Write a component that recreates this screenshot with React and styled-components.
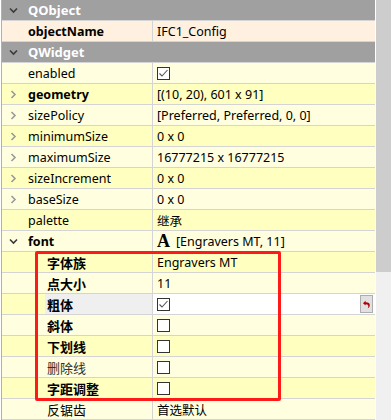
import React from 'react';
import styled, { createGlobalStyle } from 'styled-components';

const GlobalStyle = createGlobalStyle`
  html, body {
    margin: 0;
    padding: 0;
    background: #ffffff;
  }
  body {
    font-family: "Noto Sans", "Noto Sans CJK SC", sans-serif;
    font-size: 12.5px;
    color: #000;
  }
`;

const COLORS = {
  header: '#a0a0a0',
  grid: '#d4d4d4',
  peach: '#fff0df',
  light: '#ffffdf',
  yellow: '#ffffbf',
  selLabel: '#efefef',
  selValue: '#ffffff',
};

const Page = styled.div`
  display: flex;
  width: 391px;
  height: 420px;
  overflow: hidden;
`;

const Tree = styled.div`
  width: 373px;
  display: flex;
  flex-direction: column;
  border-left: 1px solid #b0b0b0;
  margin-left: 1px;
  border-right: 1px solid #ffffff;
`;

const ScrollBar = styled.div`
  width: 16px;
  background: #f0f0f0;
  display: flex;
  flex-direction: column;
`;

const Thumb = styled.div`
  height: 272px;
  background: #cdcdcd;
`;

const HeaderRow = styled.div`
  height: 20px;
  flex: none;
  display: flex;
  align-items: center;
  background: ${COLORS.header};
  border-bottom: 1px solid ${COLORS.grid};
  color: #ffffff;
  font-weight: bold;
  font-size: 13px;
  padding-left: 7px;
`;

const Row = styled.div`
  height: 20px;
  flex: none;
  display: grid;
  grid-template-columns: 151px 1fr;
  border-bottom: 1px solid ${COLORS.grid};
  background: ${(p) => p.$bg};
`;

const LabelCell = styled.div`
  display: flex;
  align-items: center;
  padding-left: 7px;
  border-right: 1px solid ${COLORS.grid};
  white-space: nowrap;
  overflow: hidden;
`;

const LabelText = styled.div`
  flex: 1;
  align-self: stretch;
  display: flex;
  align-items: center;
  font-size: ${(p) => (p.$sub ? '13px' : '12.5px')};
  padding-left: ${(p) => (p.$sub ? '2px' : '0')};
  margin-left: ${(p) => (p.$sub ? '17px' : '0')};
  background: ${(p) => (p.$selected ? COLORS.selLabel : 'transparent')};
  font-weight: ${(p) => (p.$bold ? 'bold' : 'normal')};
  color: ${(p) => (p.$dim ? '#303030' : '#000')};
`;

const ArrowSlot = styled.div`
  width: 19px;
  flex: none;
  display: flex;
  align-items: center;
`;

const ValueCell = styled.div`
  display: flex;
  align-items: center;
  gap: 6px;
  padding-left: 4px;
  white-space: nowrap;
  overflow: hidden;
  background: ${(p) => (p.$selected ? COLORS.selValue : 'transparent')};
`;

const Spacer = styled.div`
  flex: 1;
`;

const Box = styled.div`
  width: 11px;
  height: 11px;
  border: 1px solid #333333;
  background: #ffffff;
  display: flex;
  align-items: center;
  justify-content: center;
`;

const FontGlyph = styled.span`
  font-family: "Liberation Serif", serif;
  font-weight: bold;
  font-size: 18px;
  line-height: 1;
`;

const ResetButton = styled.div`
  width: 11px;
  height: 16px;
  margin-right: 2px;
  border: 1px solid #adadad;
  background: #e1e1e1;
  display: flex;
  align-items: center;
  justify-content: center;
`;

const Highlight = styled.div`
  position: absolute;
  left: 35px;
  top: 251px;
  width: 240px;
  height: 144px;
  border: 3px solid #ff1a1a;
  border-radius: 2px;
  pointer-events: none;
`;

const Frame = styled.div`
  position: relative;
`;

const Chevron = ({ open, color }) => (
  <svg width="9" height="9" viewBox="0 0 9 9">
    {open ? (
      <polyline points="1,2.5 4.5,6 8,2.5" fill="none" stroke={color} strokeWidth="1.6" />
    ) : (
      <polyline points="2.5,1 6,4.5 2.5,8" fill="none" stroke={color} strokeWidth="1.6" />
    )}
  </svg>
);

const Check = ({ checked }) => (
  <Box>
    {checked && (
      <svg width="11" height="11" viewBox="0 0 11 11">
        <polyline points="1.5,5.5 4,8 9.5,2" fill="none" stroke="#555" strokeWidth="1.1" />
      </svg>
    )}
  </Box>
);

const ResetIcon = () => (
  <svg width="9" height="9" viewBox="0 0 9 9">
    <path d="M1 3.2 L3.6 0.8 L3.6 2.3 Q8 2.3 7.8 5.6 Q7.6 7.6 5.8 8.2 Q6.6 6.6 6.2 5.4 Q5.6 4.1 3.6 4.2 L3.6 5.6 Z" fill="#b00000" />
  </svg>
);

const rows = [
  { label: 'enabled', value: { check: true } },
  { label: 'geometry', bold: true, arrow: 'closed', value: '[(10, 20), 601 x 91]' },
  { label: 'sizePolicy', arrow: 'closed', value: '[Preferred, Preferred, 0, 0]' },
  { label: 'minimumSize', arrow: 'closed', value: '0 x 0' },
  { label: 'maximumSize', arrow: 'closed', value: '16777215 x 16777215' },
  { label: 'sizeIncrement', arrow: 'closed', value: '0 x 0' },
  { label: 'baseSize', arrow: 'closed', value: '0 x 0' },
  { label: 'palette', value: '继承' },
  { label: 'font', bold: true, arrow: 'open', value: { font: '[Engravers MT, 11]' } },
  { label: '字体族', bold: true, sub: true, value: 'Engravers MT' },
  { label: '点大小', bold: true, sub: true, value: '11' },
  { label: '粗体', bold: true, sub: true, selected: true, value: { check: true, reset: true } },
  { label: '斜体', bold: true, sub: true, value: { check: false } },
  { label: '下划线', bold: true, sub: true, value: { check: false } },
  { label: '删除线', sub: true, dim: true, value: { check: false } },
  { label: '字距调整', bold: true, sub: true, value: { check: false } },
  { label: '反锯齿', sub: true, value: '首选默认' },
];

const renderValue = (value) => {
  if (typeof value === 'string') return value;
  if (value.font) {
    return (
      <>
        <FontGlyph>A</FontGlyph>
        <span>{value.font}</span>
      </>
    );
  }
  return (
    <>
      <Check checked={value.check} />
      {value.reset && (
        <>
          <Spacer />
          <ResetButton>
            <ResetIcon />
          </ResetButton>
        </>
      )}
    </>
  );
};

const PropertyRow = ({ row, index }) => (
  <Row $bg={index % 2 === 0 ? COLORS.light : COLORS.yellow}>
    <LabelCell>
      <ArrowSlot>
        {row.arrow && (
          <Chevron open={row.arrow === 'open'} color={row.arrow === 'open' ? '#3a3a3a' : '#9a9a9a'} />
        )}
      </ArrowSlot>
      <LabelText $sub={row.sub} $bold={row.bold} $selected={row.selected} $dim={row.dim}>
        {row.label}
      </LabelText>
    </LabelCell>
    <ValueCell $selected={row.selected}>{renderValue(row.value)}</ValueCell>
  </Row>
);

export default function App() {
  return (
    <Page>
      <GlobalStyle />
      <Frame>
        <Tree>
          <HeaderRow>
            <ArrowSlot>
              <Chevron open color="#3a3a3a" />
            </ArrowSlot>
            QObject
          </HeaderRow>
          <Row $bg={COLORS.peach}>
            <LabelCell>
              <ArrowSlot />
              <LabelText $bold>objectName</LabelText>
            </LabelCell>
            <ValueCell>IFC1_Config</ValueCell>
          </Row>
          <HeaderRow>
            <ArrowSlot>
              <Chevron open color="#3a3a3a" />
            </ArrowSlot>
            QWidget
          </HeaderRow>
          {rows.map((row, i) => (
            <PropertyRow key={row.label} row={row} index={i} />
          ))}
        </Tree>
        <Highlight />
      </Frame>
      <ScrollBar>
        <Thumb />
      </ScrollBar>
    </Page>
  );
}
